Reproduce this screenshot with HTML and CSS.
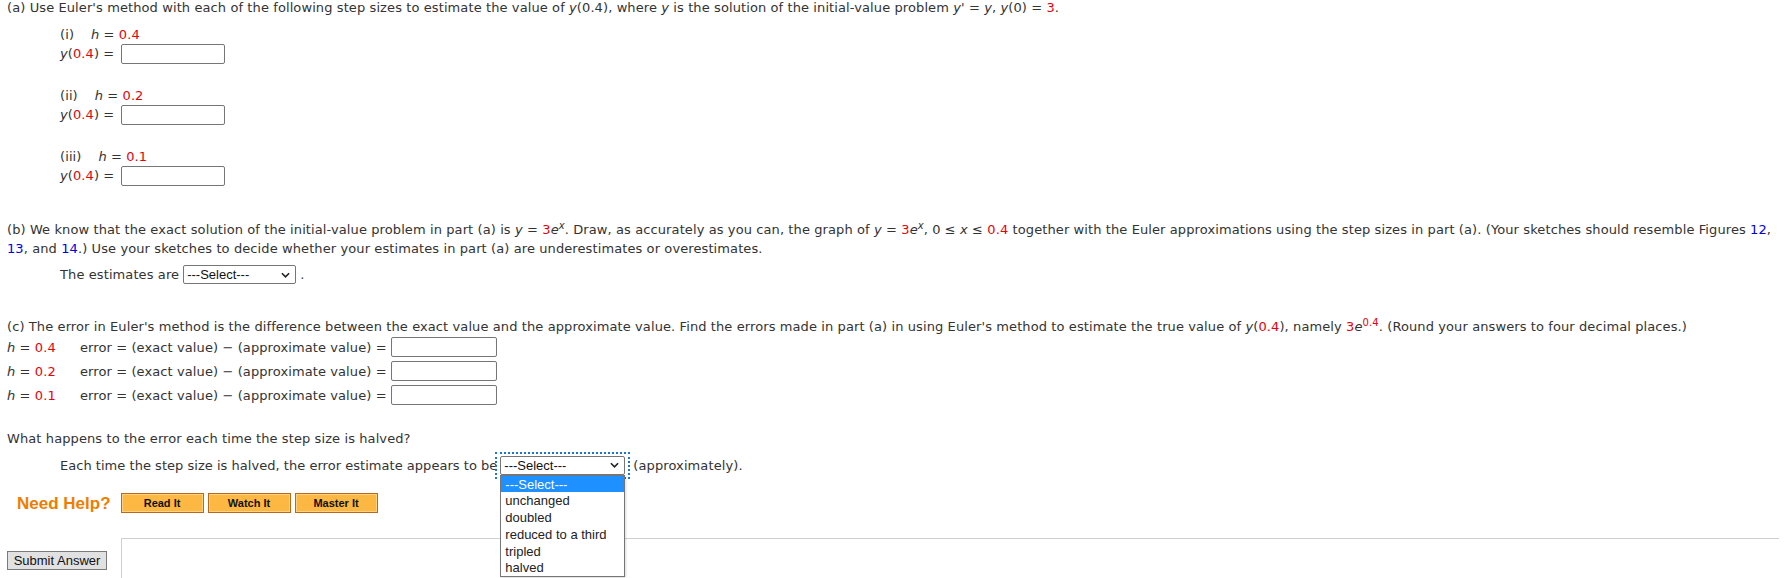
FILE: index.html
```html
<!DOCTYPE html>
<html>
<head>
<meta charset="utf-8">
<link rel="stylesheet" href="styles.css">
</head>
<body>
<div class="page">
  <p class="para pa">(a) Use Euler's method with each of the following step sizes to estimate the value of <i>y</i>(0.4), where <i>y</i> is the solution of the initial-value problem <i>y'</i> = <i>y</i>, <i>y</i>(0) = <span class="r">3</span>.</p>

  <div class="sub s1">
    <div class="lab">(i)&nbsp;&nbsp;&nbsp; <i>h</i> = <span class="r">0.4</span></div>
    <div class="ansrow"><span class="eq"><i>y</i>(<span class="r">0.4</span>) =</span><span class="inp"></span></div>
  </div>
  <div class="sub">
    <div class="lab">(ii)&nbsp;&nbsp;&nbsp; <i>h</i> = <span class="r">0.2</span></div>
    <div class="ansrow"><span class="eq"><i>y</i>(<span class="r">0.4</span>) =</span><span class="inp"></span></div>
  </div>
  <div class="sub">
    <div class="lab">(iii)&nbsp;&nbsp;&nbsp; <i>h</i> = <span class="r">0.1</span></div>
    <div class="ansrow"><span class="eq"><i>y</i>(<span class="r">0.4</span>) =</span><span class="inp"></span></div>
  </div>

  <p class="para pb">(b) We know that the exact solution of the initial-value problem in part (a) is <i>y</i> = <span class="r">3</span><i>e</i><sup><i>x</i></sup>. Draw, as accurately as you can, the graph of <i>y</i> = <span class="r">3</span><i>e</i><sup><i>x</i></sup>, 0 ≤ <i>x</i> ≤ <span class="r">0.4</span> together with the Euler approximations using the step sizes in part (a). (Your sketches should resemble Figures <span class="b">12</span>, <span class="b">13</span>, and <span class="b">14</span>.) Use your sketches to decide whether your estimates in part (a) are underestimates or overestimates.</p>
  <div class="estrow"><span>The estimates are</span><span class="sel sel-b">---Select---<svg class="chev" viewBox="0 0 10 6" width="9" height="6"><path d="M1 1 L5 5 L9 1" fill="none" stroke="#222" stroke-width="1.8"/></svg></span><span>.</span></div>

  <p class="para pc">(c) The error in Euler's method is the difference between the exact value and the approximate value. Find the errors made in part (a) in using Euler's method to estimate the true value of <i>y</i>(<span class="r">0.4</span>), namely <span class="r">3</span><i>e</i><sup class="r">0.4</sup>. (Round your answers to four decimal places.)</p>
  <div class="errgrid">
    <div class="errrow"><span class="hcol"><i>h</i> = <span class="r">0.4</span></span><span>error = (exact value) − (approximate value) =</span><span class="inp"></span></div>
    <div class="errrow"><span class="hcol"><i>h</i> = <span class="r">0.2</span></span><span>error = (exact value) − (approximate value) =</span><span class="inp"></span></div>
    <div class="errrow"><span class="hcol"><i>h</i> = <span class="r">0.1</span></span><span>error = (exact value) − (approximate value) =</span><span class="inp"></span></div>
  </div>

  <p class="para pq">What happens to the error each time the step size is halved?</p>
  <div class="halfrow"><span class="halftext">Each time the step size is halved, the error estimate appears to be</span><span class="focus"><span class="sel sel-c">---Select---<svg class="chev" viewBox="0 0 10 6" width="9" height="6"><path d="M1 1 L5 5 L9 1" fill="none" stroke="#222" stroke-width="1.8"/></svg></span><span class="dropdown">
        <span class="opt on">---Select---</span>
        <span class="opt">unchanged</span>
        <span class="opt">doubled</span>
        <span class="opt">reduced to a third</span>
        <span class="opt">tripled</span>
        <span class="opt">halved</span>
      </span></span><span>(approximately).</span></div>

  <div class="help">
    <span class="needhelp">Need Help?</span>
    <span class="hbtn">Read It</span>
    <span class="hbtn">Watch It</span>
    <span class="hbtn">Master It</span>
  </div>

  <div class="submitrow">
    <span class="submit">Submit Answer</span>
    <div class="box"></div>
  </div>
</div>
</body>
</html>
```
FILE: styles.css
```css
html, body {
  margin: 0;
  padding: 0;
  background: #fff;
}
.page {
  padding: 0 8px 0 7px;
  font-family: "DejaVu Sans", Verdana, sans-serif;
  font-size: 13px;
  letter-spacing: 0.1px;
  color: #333;
  line-height: 19px;
}
i {
  font-style: italic;
}
.r { color: #e8000b; }
.b { color: #0000dd; }
sup {
  font-size: 10px;
  line-height: 0;
  vertical-align: 5px;
}
.para {
  margin: 0;
}
.pa {
  line-height: 16px;
}
.sub {
  padding-left: 53px;
  margin-top: 23px;
}
.sub.s1 {
  margin-top: 10px;
}
.lab {
  line-height: 17px;
}
.ansrow {
  display: flex;
  align-items: center;
  height: 21px;
}
.eq {
  margin-right: 7px;
}
.inp {
  display: inline-block;
  width: 104px;
  height: 20px;
  border: 1px solid #767676;
  border-radius: 2px;
  background: #fff;
  box-sizing: border-box;
}

.pb {
  margin-top: 34px;
}
.estrow {
  padding-left: 53px;
  margin-top: 7px;
  display: flex;
  align-items: center;
  gap: 4px;
}
.sel {
  display: inline-flex;
  align-items: center;
  justify-content: space-between;
  box-sizing: border-box;
  height: 19px;
  border: 1px solid #767676;
  border-radius: 2px;
  background: #fff;
  font-family: "Liberation Sans", Arial, sans-serif;
  font-size: 13px;
  letter-spacing: 0;
  color: #111;
  padding: 0 5px 0 3px;
  line-height: 17px;
}
.sel-b { width: 113px; }
.sel-c { width: 125px; }
.chev { flex: none; }

.pc {
  margin-top: 33px;
}
.errgrid {
  margin-top: -1px;
}
.errrow {
  display: flex;
  align-items: center;
  height: 24px;
}
.hcol {
  width: 73px;
}
.errrow .inp {
  width: 106px;
  margin-left: 4px;
}

.pq {
  margin-top: 22px;
}
.halfrow {
  padding-left: 53px;
  margin-top: 3px;
  display: flex;
  align-items: center;
  height: 28px;
}
.halftext {
  letter-spacing: 0.03px;
}
.focus {
  position: relative;
  display: inline-flex;
  padding: 4px 5px 4px 5px;
  margin: 0 3px 0 -2px;
  outline: 2px dotted #1b76d3;
  outline-offset: -2px;
}
.dropdown {
  position: absolute;
  left: 5px;
  top: 23px;
  width: 125px;
  box-sizing: border-box;
  border: 1px solid #767676;
  background: #fff;
  display: flex;
  flex-direction: column;
  font-family: "Liberation Sans", Arial, sans-serif;
  font-size: 13px;
  letter-spacing: 0;
  color: #222;
  z-index: 5;
  box-shadow: 1px 1px 2px rgba(0,0,0,0.15);
}
.opt {
  height: 16.8px;
  line-height: 17px;
  padding-left: 4px;
  white-space: nowrap;
}
.opt.on {
  background: #1e90ff;
  color: #fff;
}

.help {
  display: flex;
  align-items: center;
  margin-top: 11px;
  padding-left: 10px;
  height: 26px;
}
.needhelp {
  font-family: "Liberation Sans", Arial, sans-serif;
  font-weight: bold;
  font-size: 17px;
  letter-spacing: 0;
  color: #ef7d00;
  margin-right: 10px;
}
.hbtn {
  display: inline-flex;
  align-items: center;
  justify-content: center;
  box-sizing: border-box;
  width: 83px;
  height: 20px;
  margin-right: 4px;
  background: #fcb843;
  border: 1px solid #b8691b;
  box-shadow: inset 0 0 0 1px #fdd27f;
  font-family: "Liberation Sans", Arial, sans-serif;
  font-weight: bold;
  font-size: 11px;
  letter-spacing: 0;
  color: #111;
}

.submitrow {
  display: flex;
  align-items: flex-start;
  margin-top: 22px;
}
.submit {
  margin-top: 13px;
  display: inline-flex;
  align-items: center;
  justify-content: center;
  box-sizing: border-box;
  width: 100px;
  height: 19px;
  background: #e1e1e1;
  border: 1px solid #7a7a7a;
  font-family: "Liberation Sans", Arial, sans-serif;
  font-size: 13px;
  letter-spacing: 0;
  color: #111;
}
.box {
  margin-left: 14px;
  flex: 1;
  height: 60px;
  border: 1px solid #cfcfcf;
  border-right: none;
}
```
